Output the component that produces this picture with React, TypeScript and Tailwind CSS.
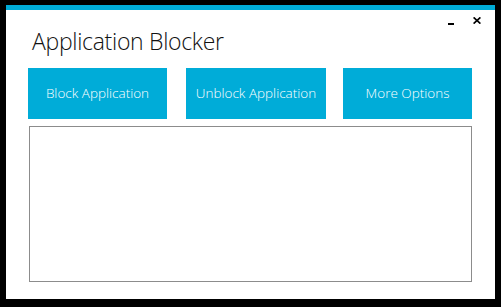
import React from "react";

export default function App() {
  const font = { fontFamily: '"Open Sans", "Noto Sans", sans-serif' };
  return (
    <div className="w-[501px] h-[307px] bg-black pt-[5px] pl-[6px]" style={font}>
      <div className="w-[489px] h-[294px] bg-white border-t-[5px] border-[#00acd8] flex flex-col">
        <div className="h-[16px] flex justify-end items-start pt-[7px] pr-[14px] gap-[19px]">
          <svg width="6" height="8" viewBox="0 0 6 8" aria-label="minimize">
            <rect x="0" y="6" width="6" height="2" fill="#000" />
          </svg>
          <svg width="8" height="7" viewBox="0 0 8 7" aria-label="close">
            <path d="M0.6 0.4 L7.4 6.6 M7.4 0.4 L0.6 6.6" stroke="#000" strokeWidth="1.7" />
          </svg>
        </div>
        <div className="h-[42px] pl-[26px] pt-[4px] flex items-start">
          <span className="text-[23px] font-light leading-none text-[#111] tracking-[-0.3px]">
            Application Blocker
          </span>
        </div>
        <div className="flex pl-[22px] h-[51px]">
          <button className="w-[139px] h-full bg-[#00acd8] text-white text-[13.5px] font-light">
            Block Application
          </button>
          <button className="ml-[19px] w-[140px] h-full bg-[#00acd8] text-white text-[13.5px] font-light">
            Unblock Application
          </button>
          <button className="ml-[17px] w-[129px] h-full bg-[#00acd8] text-white text-[13.5px] font-light">
            More Options
          </button>
        </div>
        <div className="mt-[7px] ml-[23px] w-[443px] h-[156px] border border-[#8c8c8c] bg-white" />
      </div>
    </div>
  );
}
